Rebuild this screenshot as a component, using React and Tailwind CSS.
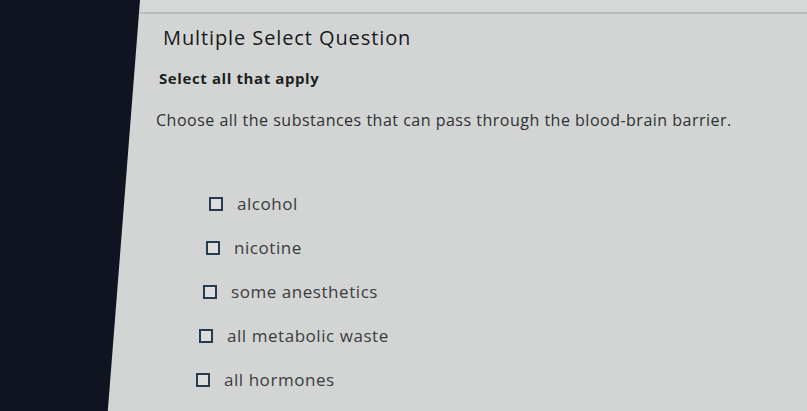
import React from "react";

const options = [
  { label: "alcohol", pad: "pl-[69px]", mt: "mt-0" },
  { label: "nicotine", pad: "pl-[66px]", mt: "mt-[26px]" },
  { label: "some anesthetics", pad: "pl-[63px]", mt: "mt-[26px]" },
  { label: "all metabolic waste", pad: "pl-[59px]", mt: "mt-[26px]" },
  { label: "all hormones", pad: "pl-[56px]", mt: "mt-[26px]" },
];

const App = () => {
  return (
    <div
      className="flex h-[411px] w-[807px] overflow-hidden bg-[#d3d5d5]"
      style={{ fontFamily: "'Open Sans', Lato, sans-serif" }}
    >
      <div className="h-full w-[140px] shrink-0 bg-[#0f1420] [clip-path:polygon(0_0,100%_0,77%_100%,0_100%)]" />

      <div className="flex-1">
        <div className="h-[14px] border-b-2 border-[#babdbf] bg-[#d6d8d8]" />

        <div className="pt-[10px]">
          <h1 className="pl-[23px] text-[20px] leading-[28px] tracking-[0.9px] text-[#17191b]">
            Multiple Select Question
          </h1>
          <p className="mt-[15px] pl-[19px] text-[15px] font-bold tracking-[0.6px] text-[#1d1f21]">
            Select all that apply
          </p>
          <p className="mt-[18px] pl-[16px] text-[16px] tracking-[0.5px] text-[#2e3032]">
            Choose all the substances that can pass through the blood-brain barrier.
          </p>

          <div className="mt-[63px] flex flex-col">
            {options.map((opt) => (
              <label
                key={opt.label}
                className={`flex items-center gap-[14px] ${opt.pad} ${opt.mt}`}
              >
                <span className="h-[14px] w-[14px] border-2 border-[#263a50] bg-[#dcdede]" />
                <span className="text-[17px] leading-[18px] tracking-[0.55px] text-[#3a3c3e]">
                  {opt.label}
                </span>
              </label>
            ))}
          </div>
        </div>
      </div>
    </div>
  );
};

export default App;
